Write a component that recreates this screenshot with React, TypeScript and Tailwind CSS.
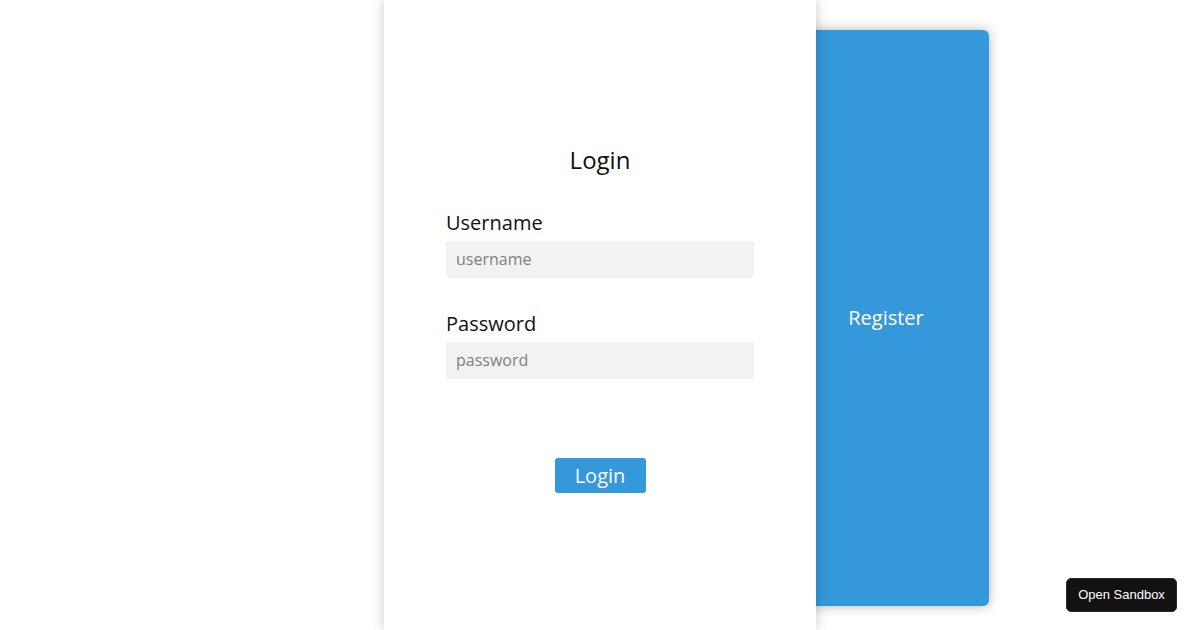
import React from "react";

export default function App() {
  return (
    <div
      className="relative w-full h-[630px] overflow-hidden bg-white"
      style={{ fontFamily: '"Open Sans", "Noto Sans", sans-serif' }}
    >
      <div className="flex h-full justify-center">
        <div className="relative w-[432px] h-full">
          <div className="absolute left-[399px] top-[30px] w-[206px] h-[576px] rounded-md bg-[#3498db] shadow-[0_0_12px_rgba(0,0,0,0.3)] flex items-center justify-center">
            <span className="text-[20px] leading-[28px] text-white">Register</span>
          </div>
          <div className="relative z-10 w-full h-full bg-white shadow-[0_0_12px_rgba(0,0,0,0.22)] px-[62px] pt-[144px] flex flex-col">
            <h1 className="text-[24px] leading-[32px] text-[#111] text-center font-normal">Login</h1>
            <label className="mt-[33px] text-[20px] leading-[28px] text-[#111]">Username</label>
            <input
              className="mt-[4px] h-[37px] w-full rounded-[3px] bg-[#f2f2f2] px-[10px] pb-[1px] text-[16px] text-[#333] outline-none placeholder:text-[#808080]"
              placeholder="username"
            />
            <label className="mt-[32px] text-[20px] leading-[28px] text-[#111]">Password</label>
            <input
              type="password"
              className="mt-[4px] h-[37px] w-full rounded-[3px] bg-[#f2f2f2] px-[10px] pb-[1px] text-[16px] text-[#333] outline-none placeholder:text-[#808080]"
              placeholder="password"
            />
            <div className="mt-[79px] flex justify-center">
              <button className="h-[35px] w-[91px] rounded-[3px] bg-[#3498db] text-[20px] leading-[28px] text-white">
                Login
              </button>
            </div>
          </div>
        </div>
      </div>
      <button
        className="absolute right-[23px] bottom-[18px] h-[34px] w-[111px] rounded-[5px] bg-[#121212] border border-[#2a2a2a] text-[13px] text-white"
        style={{ fontFamily: '"Liberation Sans", Arial, sans-serif' }}
      >
        Open Sandbox
      </button>
    </div>
  );
}
